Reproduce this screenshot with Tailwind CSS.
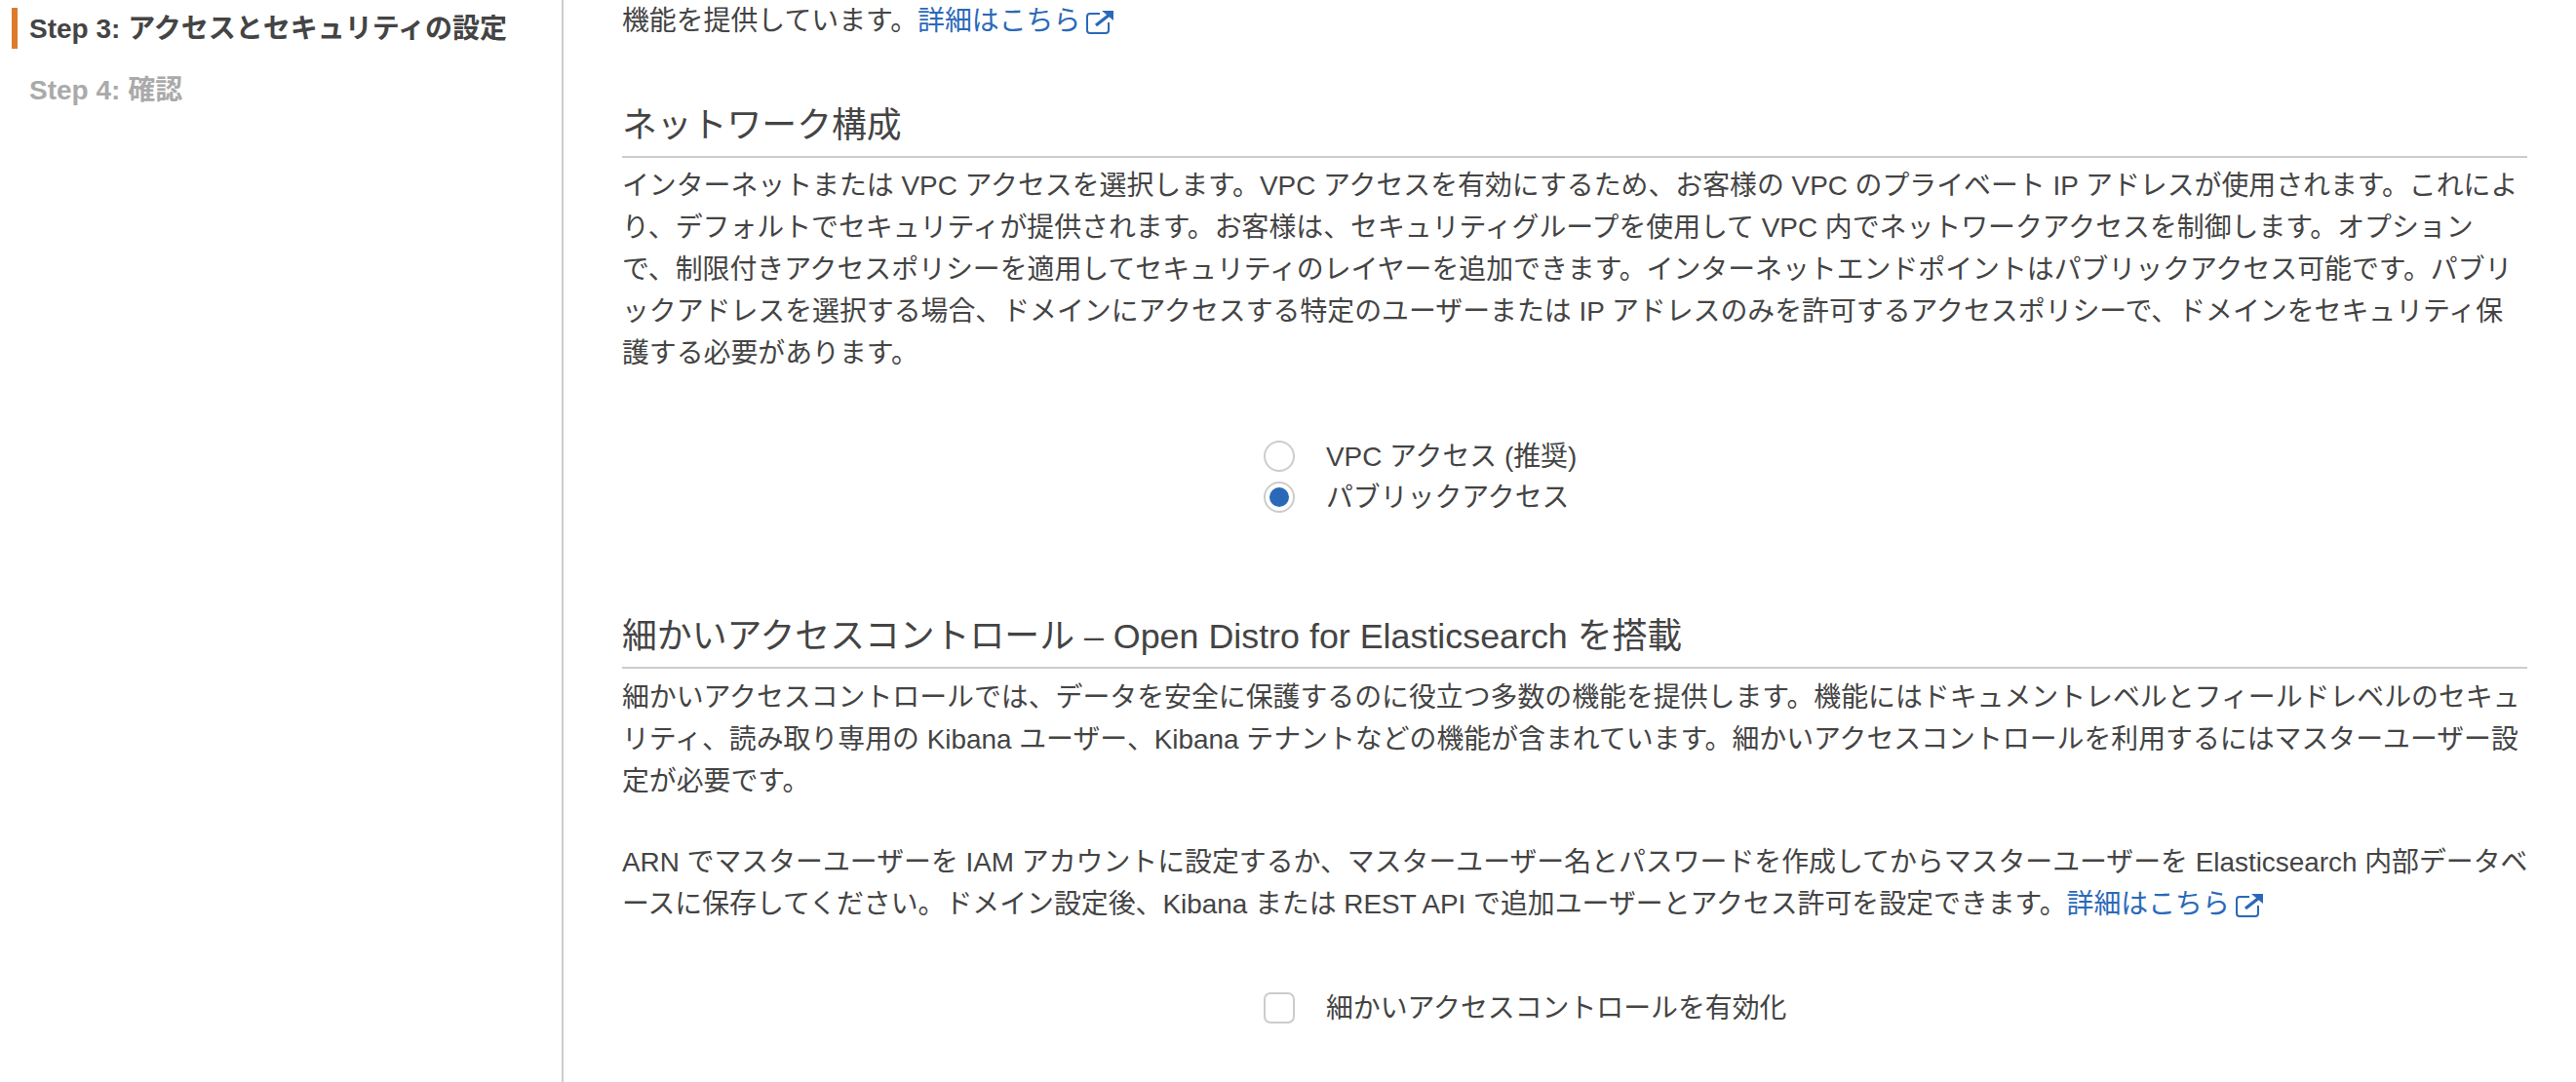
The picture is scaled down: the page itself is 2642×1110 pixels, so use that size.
<!DOCTYPE html>
<html lang="ja">
  <head>
    <meta charset="UTF-8" />
    <title>Step 3: アクセスとセキュリティの設定</title>
    <script src="https://cdn.jsdelivr.net/npm/@tailwindcss/browser@4"></script>
  </head>
  <body class="bg-white font-['Liberation_Sans','Noto_Sans_CJK_JP',sans-serif] text-[27.88px] leading-[43px] text-[#444]">
    <div class="flex h-[1110px] overflow-hidden">
      <aside class="w-[578px] shrink-0 border-r-2 border-[#ccc] pt-2 pl-3 text-[28px]">
        <div class="border-l-[6px] border-[#dd7b2b] pl-3 h-[42px] font-bold leading-[44px] whitespace-nowrap">
          Step 3: アクセスとセキュリティの設定
        </div>
        <div class="mt-[22px] pl-[18px] font-bold leading-[42px] text-[#aaa]">Step 4: 確認</div>
      </aside>

      <main class="flex-1 min-w-0 pl-[60px] pr-[50px]">
        <p class="whitespace-nowrap">
          機能を提供しています。<a class="text-[#2a69b8]">詳細はこちら<svg class="inline-block w-[29px] h-6 ml-[5px] align-[-4px]" viewBox="0 0 29 24" fill="none" stroke="#2a69b8" stroke-width="2"><path d="M15 3H5a3 3 0 0 0-3 3v14a3 3 0 0 0 3 3h16a3 3 0 0 0 3-3v-8" /><path d="M11 15 25 4" stroke-width="3.4" /><path d="M17 0h12v10z" fill="#2a69b8" stroke="none" /></svg></a>
        </p>

        <h2 class="mt-[63px] pb-2 border-b-2 border-[#ccc] text-[35.84px] leading-[46px]">ネットワーク構成</h2>
        <p class="mt-[7px] whitespace-nowrap">
          インターネットまたは VPC アクセスを選択します。VPC アクセスを有効にするため、お客様の VPC のプライベート IP アドレスが使用されます。これによ<br />
          り、デフォルトでセキュリティが提供されます。お客様は、セキュリティグループを使用して VPC 内でネットワークアクセスを制御します。オプション<br />
          で、制限付きアクセスポリシーを適用してセキュリティのレイヤーを追加できます。インターネットエンドポイントはパブリックアクセス可能です。パブリ<br />
          ックアドレスを選択する場合、ドメインにアクセスする特定のユーザーまたは IP アドレスのみを許可するアクセスポリシーで、ドメインをセキュリティ保<br />
          護する必要があります。
        </p>

        <div class="mt-[68px] ml-[658px] flex flex-col gap-[10px]">
          <label class="flex items-center gap-8 h-8">
            <span class="w-8 h-8 rounded-full border-2 border-[#ccc]"></span>
            VPC アクセス (推奨)
          </label>
          <label class="flex items-center gap-8 h-8">
            <span class="w-8 h-8 rounded-full border-2 border-[#ccc] flex items-center justify-center">
              <span class="w-5 h-5 rounded-full bg-[#2a69b8]"></span>
            </span>
            パブリックアクセス
          </label>
        </div>

        <h2 class="mt-[104px] pb-2 border-b-2 border-[#ccc] text-[35.84px] leading-[46px]">細かいアクセスコントロール – Open Distro for Elasticsearch を搭載</h2>
        <p class="mt-2 whitespace-nowrap">
          細かいアクセスコントロールでは、データを安全に保護するのに役立つ多数の機能を提供します。機能にはドキュメントレベルとフィールドレベルのセキュ<br />
          リティ、読み取り専用の Kibana ユーザー、Kibana テナントなどの機能が含まれています。細かいアクセスコントロールを利用するにはマスターユーザー設<br />
          定が必要です。
        </p>
        <p class="mt-10 whitespace-nowrap">
          ARN でマスターユーザーを IAM アカウントに設定するか、マスターユーザー名とパスワードを作成してからマスターユーザーを Elasticsearch 内部データベ<br />
          ースに保存してください。ドメイン設定後、Kibana または REST API で追加ユーザーとアクセス許可を設定できます。<a class="text-[#2a69b8]">詳細はこちら<svg class="inline-block w-[29px] h-6 ml-[5px] align-[-4px]" viewBox="0 0 29 24" fill="none" stroke="#2a69b8" stroke-width="2"><path d="M15 3H5a3 3 0 0 0-3 3v14a3 3 0 0 0 3 3h16a3 3 0 0 0 3-3v-8" /><path d="M11 15 25 4" stroke-width="3.4" /><path d="M17 0h12v10z" fill="#2a69b8" stroke="none" /></svg></a>
        </p>

        <label class="mt-[69px] ml-[658px] flex items-center gap-8 h-8">
          <span class="w-8 h-8 rounded-[7px] border-2 border-[#ccc]"></span>
          細かいアクセスコントロールを有効化
        </label>
      </main>
    </div>
  </body>
</html>
